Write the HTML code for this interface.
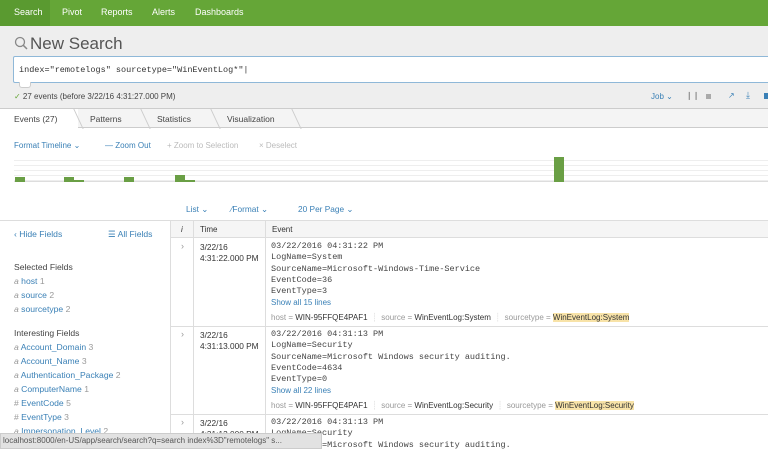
<!DOCTYPE html>
<html><head><meta charset="utf-8"><style>
*{margin:0;padding:0;box-sizing:border-box}
body{width:768px;height:449px;overflow:hidden;background:#fff;font-family:"Liberation Sans",sans-serif;font-size:9px;color:#333;position:relative}
.a{position:absolute;white-space:nowrap}
.mono{font-family:"Liberation Mono",monospace;font-size:8.5px;color:#444}
.blue{color:#3a80b6}
.g{color:#999}
.f{font-size:8.6px}
</style></head><body>
<div class="a" style="left:0;top:0;width:768px;height:26px;background:#65a637"></div>
<div class="a" style="left:0;top:0;width:50px;height:26px;background:#5a9a30"></div>
<div class="a" style="top:7px;left:14px;color:#fff;font-size:9px">Search</div>
<div class="a" style="top:7px;left:62px;color:#fff">Pivot</div>
<div class="a" style="top:7px;left:101px;color:#fff">Reports</div>
<div class="a" style="top:7px;left:152px;color:#fff">Alerts</div>
<div class="a" style="top:7px;left:195px;color:#fff">Dashboards</div>
<div class="a" style="left:0;top:26px;width:768px;height:83px;background:#eeeeee"></div>
<svg class="a" style="left:14px;top:36px" width="14" height="14"><circle cx="6" cy="6" r="4.5" fill="none" stroke="#888" stroke-width="1.3"/><line x1="9.3" y1="9.3" x2="13" y2="13" stroke="#888" stroke-width="1.5"/></svg>
<div class="a" style="top:34px;left:30px;font-size:17px;color:#555">New Search</div>
<div class="a" style="left:13px;top:56px;width:760px;height:27px;background:#fff;border:1px solid #8fb8d8;border-radius:2px"></div>
<div class="a mono" style="left:19px;top:65px;font-size:8.5px;color:#333">index="remotelogs" sourcetype="WinEventLog*"|</div>
<div class="a" style="left:19px;top:82px;width:12px;height:6px;background:#fff;border:1px solid #ccc;border-top:none;border-radius:0 0 3px 3px"></div>
<div class="a" style="left:14px;top:92px;font-size:8px;color:#444"><span style="color:#65a637">✓</span> 27 events (before 3/22/16 4:31:27.000 PM)</div>
<div class="a blue" style="left:651px;top:92px;font-size:8px">Job ⌄</div>
<div class="a g" style="left:686px;top:91px;font-size:8px">❙❙</div>
<div class="a" style="left:706px;top:94px;width:5px;height:5px;background:#aaa"></div>
<div class="a blue" style="left:728px;top:91px;font-size:8px">↗</div>
<div class="a blue" style="left:746px;top:90px;font-size:9px">⤓</div>
<div class="a" style="left:764px;top:93px;width:5px;height:6px;background:#3a80b6"></div>
<div class="a" style="left:0;top:108px;width:768px;height:1px;background:#ccc"></div>
<div class="a" style="left:0;top:109px;width:768px;height:19px;background:#f4f4f4;border-bottom:1px solid #ccc"></div>
<div class="a" style="left:0;top:109px;width:78px;height:20px;background:#fff"></div>
<div class="a" style="top:114px;left:14px;color:#444;font-size:8.5px">Events (27)</div>
<div class="a" style="top:114px;left:90px;color:#444;font-size:8.5px">Patterns</div>
<div class="a" style="top:114px;left:157px;color:#444;font-size:8.5px">Statistics</div>
<div class="a" style="top:114px;left:227px;color:#444;font-size:8.5px">Visualization</div>
<div class="a" style="top:109px;left:78px;width:1px;height:20px;background:#ccc;transform:skewX(25deg)"></div>
<div class="a" style="top:109px;left:145px;width:1px;height:20px;background:#ccc;transform:skewX(25deg)"></div>
<div class="a" style="top:109px;left:215px;width:1px;height:20px;background:#ccc;transform:skewX(25deg)"></div>
<div class="a" style="top:109px;left:296px;width:1px;height:20px;background:#ccc;transform:skewX(25deg)"></div>
<div class="a blue" style="top:141px;left:14px;font-size:8px">Format Timeline ⌄</div>
<div class="a blue" style="top:141px;left:105px;font-size:8px">— Zoom Out</div>
<div class="a" style="top:141px;left:167px;font-size:8px;color:#bbb">+ Zoom to Selection</div>
<div class="a" style="top:141px;left:259px;font-size:8px;color:#bbb">× Deselect</div>
<div class="a" style="left:14px;top:156px;width:754px;height:26px;background:repeating-linear-gradient(#fff 0 4px,#eee 4px 5px);border-bottom:1px solid #ddd"></div>
<div class="a" style="left:15px;top:177px;width:10px;height:5px;background:#6a9f45"></div>
<div class="a" style="left:64px;top:177px;width:10px;height:5px;background:#6a9f45"></div>
<div class="a" style="left:74px;top:180px;width:10px;height:2px;background:#6a9f45"></div>
<div class="a" style="left:124px;top:177px;width:10px;height:5px;background:#6a9f45"></div>
<div class="a" style="left:175px;top:175px;width:10px;height:7px;background:#6a9f45"></div>
<div class="a" style="left:185px;top:180px;width:10px;height:2px;background:#6a9f45"></div>
<div class="a" style="left:554px;top:157px;width:10px;height:25px;background:#6a9f45"></div>
<div class="a blue" style="top:204px;left:186px;font-size:8.3px">List ⌄</div>
<div class="a blue" style="top:204px;left:231px;font-size:8.3px">⁄Format ⌄</div>
<div class="a blue" style="top:204px;left:298px;font-size:8.3px">20 Per Page ⌄</div>
<div class="a" style="left:0;top:220px;width:768px;height:1px;background:#ddd"></div>
<div class="a blue f" style="top:229px;left:14px">‹ Hide Fields</div>
<div class="a blue f" style="top:229px;left:108px">☰ All Fields</div>
<div class="a f" style="top:262px;left:14px;color:#444">Selected Fields</div>
<div class="a f" style="top:276px;left:14px"><i class="g">a</i> <span class="blue">host</span> <span class="g">1</span></div>
<div class="a f" style="top:290px;left:14px"><i class="g">a</i> <span class="blue">source</span> <span class="g">2</span></div>
<div class="a f" style="top:304px;left:14px"><i class="g">a</i> <span class="blue">sourcetype</span> <span class="g">2</span></div>
<div class="a f" style="top:328px;left:14px;color:#444">Interesting Fields</div>
<div class="a f" style="top:342px;left:14px"><i class="g">a</i> <span class="blue">Account_Domain</span> <span class="g">3</span></div>
<div class="a f" style="top:356px;left:14px"><i class="g">a</i> <span class="blue">Account_Name</span> <span class="g">3</span></div>
<div class="a f" style="top:370px;left:14px"><i class="g">a</i> <span class="blue">Authentication_Package</span> <span class="g">2</span></div>
<div class="a f" style="top:384px;left:14px"><i class="g">a</i> <span class="blue">ComputerName</span> <span class="g">1</span></div>
<div class="a f" style="top:398px;left:14px"><span class="g">#</span> <span class="blue">EventCode</span> <span class="g">5</span></div>
<div class="a f" style="top:412px;left:14px"><span class="g">#</span> <span class="blue">EventType</span> <span class="g">3</span></div>
<div class="a f" style="top:426px;left:14px"><i class="g">a</i> <span class="blue">Impersonation_Level</span> <span class="g">2</span></div>
<div class="a" style="left:170px;top:221px;width:598px;height:17px;background:#f5f5f5;border-bottom:1px solid #ddd;border-left:1px solid #ddd"></div>
<div class="a" style="left:193px;top:221px;width:1px;height:228px;background:#ddd"></div>
<div class="a" style="left:265px;top:221px;width:1px;height:228px;background:#ddd"></div>
<div class="a" style="left:170px;top:221px;width:1px;height:228px;background:#ddd"></div>
<div class="a" style="top:225px;left:181px;font-size:8px;font-style:italic">i</div>
<div class="a" style="top:225px;left:200px;font-size:8px">Time</div>
<div class="a" style="top:225px;left:272px;font-size:8px">Event</div>
<div class="a" style="left:170px;top:326px;width:598px;height:1px;background:#ddd"></div>
<div class="a" style="left:170px;top:414px;width:598px;height:1px;background:#ddd"></div>

<div class="a g" style="top:241px;left:181px;font-size:9px">›</div>
<div class="a" style="top:242px;left:200px;font-size:8.3px;line-height:11px">3/22/16<br>4:31:22.000 PM</div>
<div class="a mono" style="top:241px;left:271px;line-height:11.3px">03/22/2016 04:31:22 PM<br>LogName=System<br>SourceName=Microsoft-Windows-Time-Service<br>EventCode=36<br>EventType=3</div>
<div class="a blue" style="top:298px;left:271px;font-size:8px">Show all 15 lines</div>
<div class="a g" style="top:313px;left:271px;font-size:8px">host = <span style="color:#333">WIN-95FFQE4PAF1</span> <span style="color:#ddd">&nbsp;┊&nbsp;</span> source = <span style="color:#333">WinEventLog:System</span> <span style="color:#ddd">&nbsp;┊&nbsp;</span> sourcetype = <span style="color:#333;background:#f8e3a8">WinEventLog:System</span></div>

<div class="a g" style="top:329px;left:181px;font-size:9px">›</div>
<div class="a" style="top:330px;left:200px;font-size:8.3px;line-height:11px">3/22/16<br>4:31:13.000 PM</div>
<div class="a mono" style="top:329px;left:271px;line-height:11.3px">03/22/2016 04:31:13 PM<br>LogName=Security<br>SourceName=Microsoft Windows security auditing.<br>EventCode=4634<br>EventType=0</div>
<div class="a blue" style="top:386px;left:271px;font-size:8px">Show all 22 lines</div>
<div class="a g" style="top:401px;left:271px;font-size:8px">host = <span style="color:#333">WIN-95FFQE4PAF1</span> <span style="color:#ddd">&nbsp;┊&nbsp;</span> source = <span style="color:#333">WinEventLog:Security</span> <span style="color:#ddd">&nbsp;┊&nbsp;</span> sourcetype = <span style="color:#333;background:#f8e3a8">WinEventLog:Security</span></div>

<div class="a g" style="top:417px;left:181px;font-size:9px">›</div>
<div class="a" style="top:418px;left:200px;font-size:8.3px;line-height:11px">3/22/16<br>4:31:13.000 PM</div>
<div class="a mono" style="top:417px;left:271px;line-height:11.3px">03/22/2016 04:31:13 PM<br>LogName=Security<br>SourceName=Microsoft Windows security auditing.</div>
<div class="a" style="left:0;top:433px;width:322px;height:16px;background:#e2e2e2;border:1px solid #ccc"></div>
<div class="a" style="top:436px;left:3px;font-size:8px;color:#555">localhost:8000/en-US/app/search/search?q=search index%3D"remotelogs" s...</div>
</body></html>
